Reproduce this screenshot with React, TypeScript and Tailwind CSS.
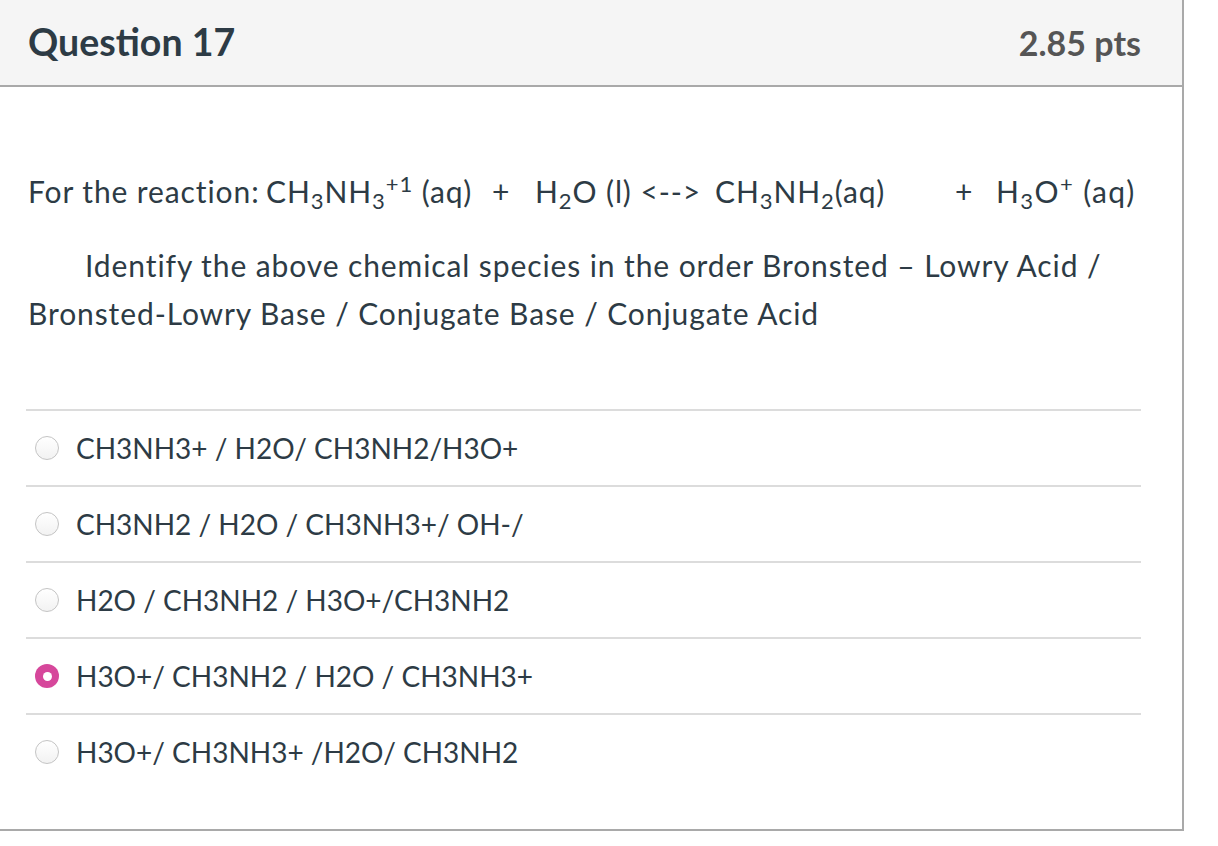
const answers = [
  { text: 'CH3NH3+ / H2O/ CH3NH2/H3O+', selected: false },
  { text: 'CH3NH2 / H2O / CH3NH3+/ OH-/', selected: false },
  { text: 'H2O / CH3NH2 / H3O+/CH3NH2', selected: false },
  { text: 'H3O+/ CH3NH2 / H2O / CH3NH3+', selected: true },
  { text: 'H3O+/ CH3NH3+ /H2O/ CH3NH2', selected: false },
];

function Radio({ selected }: { selected: boolean }) {
  if (selected) {
    return (
      <span className="flex h-[24px] w-[24px] shrink-0 items-center justify-center rounded-full bg-[#d6479b]">
        <span className="h-[9px] w-[9px] rounded-full bg-white" />
      </span>
    );
  }
  return (
    <span className="h-[24px] w-[24px] shrink-0 rounded-full border border-[#c4c4c4] bg-gradient-to-b from-white to-[#f2f2f2]" />
  );
}

export default function App() {
  return (
    <div className="min-h-screen bg-white text-[#2d3b45]" style={{ fontFamily: 'Lato, "Noto Sans", sans-serif' }}>
      <div className="w-[1184px] border-r-2 border-b-2 border-[#a9a9a9]">
        <div className="flex h-[87px] items-center justify-between border-b-2 border-[#a9a9a9] bg-[#f5f5f5] pl-[28px] pr-[41px]">
          <h2 className="text-[37.5px] font-bold">Question 17</h2>
          <span className="text-[34px] font-bold text-[#555]">2.85 pts</span>
        </div>

        <div className="pl-[28px] pr-[41px] pt-[80px]">
          {/* reaction line: segments sit at fixed widths like the original spacing */}
          <p className="text-[30px] leading-[48px] tracking-[0.9px] whitespace-pre">
            <span className="inline-block w-[238px]">For the reaction:</span>
            <span className="inline-block w-[226px]">
              CH<sub className="text-[22px]">3</sub>NH<sub className="text-[22px]">3</sub>
              <sup className="text-[22px]">+1</sup> (aq)
            </span>
            <span className="inline-block w-[43px]">+</span>
            <span className="inline-block w-[180px]">
              H<sub className="text-[22px]">2</sub>O (l) {'<-->'}
            </span>
            <span className="inline-block w-[240px]">
              CH<sub className="text-[22px]">3</sub>NH<sub className="text-[22px]">2</sub>(aq)
            </span>
            <span className="inline-block w-[41px]">+</span>
            <span className="tracking-[1.4px]">
              H<sub className="text-[22px]">3</sub>O<sup className="text-[22px]">+</sup> (aq)
            </span>
          </p>
          <p className="mt-[26px] text-[30px] leading-[48px] tracking-[0.9px] indent-[57px]">
            Identify the above chemical species in the order Bronsted – Lowry Acid / Bronsted-Lowry Base / Conjugate Base / Conjugate Acid
          </p>

          <div className="mt-[72px]">
            {answers.map((a) => (
              <div
                key={a.text}
                className="-ml-[2px] flex h-[76px] w-[1115px] items-center gap-[17px] border-t-2 border-[#dcdcdc] pl-[9px]"
              >
                <Radio selected={a.selected} />
                <span className="text-[28px]">{a.text}</span>
              </div>
            ))}
          </div>
          <div className="h-[40px]" />
        </div>
      </div>
    </div>
  );
}
